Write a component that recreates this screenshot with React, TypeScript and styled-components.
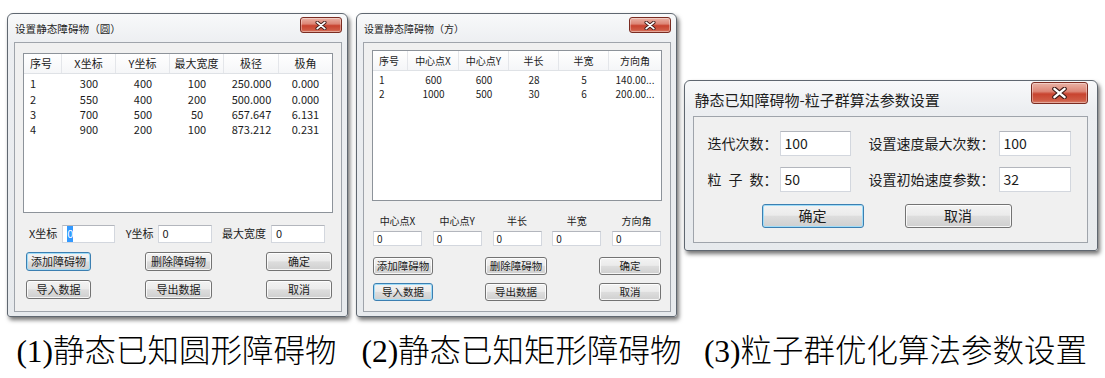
import React from "react";
import styled, { createGlobalStyle, css } from "styled-components";

const GlobalStyle = createGlobalStyle`
  html, body { margin: 0; padding: 0; background: #ffffff; }
  body { font-family: "Noto Sans CJK SC", "Noto Sans", sans-serif; }
  * { box-sizing: border-box; }
`;

const Page = styled.div`
  width: 1105px;
  height: 378px;
  overflow: hidden;
  display: flex;
  padding-left: 7px;
`;

const Figure = styled.figure<{ $w: number; $mr: number }>`
  margin: 0 ${(p) => p.$mr}px 0 0;
  width: ${(p) => p.$w}px;
  flex: none;
  display: flex;
  flex-direction: column;
`;

const Shot = styled.div`
  height: 330px;
  display: flex;
  align-items: center;
  justify-content: center;
`;

const Caption = styled.figcaption<{ $shift: number }>`
  display: flex;
  justify-content: center;
  margin-top: 4px;
  padding-left: ${(p) => (p.$shift > 0 ? p.$shift * 2 : 0)}px;
  padding-right: ${(p) => (p.$shift < 0 ? -p.$shift * 2 : 0)}px;
  font-family: "Liberation Serif", "Noto Sans CJK SC", serif;
  font-size: 31.5px;
  font-weight: 300;
  line-height: 36px;
  color: #000;
  white-space: nowrap;
`;

type Frame = { l: number; r: number; b: number; t: number };

const Window = styled.div<{ $w: number; $f: Frame }>`
  width: ${(p) => p.$w}px;
  flex: none;
  border: 1px solid #5f6770;
  border-radius: 6px 6px 3px 3px;
  background: linear-gradient(#f8f9fa, #eceef1 30px, #e7eaed);
  box-shadow: 2px 3px 4px rgba(0, 0, 0, 0.55);
  display: flex;
  flex-direction: column;
  padding: 0 ${(p) => p.$f.r - 1}px ${(p) => p.$f.b - 1}px ${(p) => p.$f.l - 1}px;
`;

const TitleBar = styled.div<{ $h: number; $fs: number }>`
  height: ${(p) => p.$h}px;
  display: flex;
  align-items: flex-start;
  justify-content: space-between;
  font-size: ${(p) => p.$fs}px;
  color: #1e1e1e;
`;

const TitleText = styled.span<{ $pt: number; $ml: number; $lh: number }>`
  padding-top: ${(p) => p.$pt}px;
  margin-left: ${(p) => p.$ml}px;
  line-height: ${(p) => p.$lh}px;
  white-space: nowrap;
`;

const CloseButton = styled.div<{ $w: number; $h: number; $mt: number }>`
  width: ${(p) => p.$w}px;
  height: ${(p) => p.$h}px;
  margin-top: ${(p) => p.$mt}px;
  border: 1px solid #7a2c22;
  border-radius: 3px;
  background: linear-gradient(#eab3a6 0%, #dd8676 42%, #c8432f 55%, #cf5a44 85%, #d9806b 100%);
  box-shadow: inset 0 0 0 1px rgba(255, 255, 255, 0.35);
  display: flex;
  align-items: center;
  justify-content: center;
`;

const CloseGlyph = ({ w, h }: { w: number; h: number }) => (
  <svg width={w} height={h} viewBox="0 0 12 9">
    <path d="M2.2 1.4 L9.8 7.6 M9.8 1.4 L2.2 7.6" stroke="#3d1a16" strokeWidth="3.4" strokeLinecap="round" fill="none" />
    <path d="M2.2 1.4 L9.8 7.6 M9.8 1.4 L2.2 7.6" stroke="#ffffff" strokeWidth="1.8" strokeLinecap="round" fill="none" />
  </svg>
);

const Client = styled.div<{ $pad: string; $fs: number }>`
  border: 1px solid #9fa4ab;
  background: #f0f0f0;
  padding: ${(p) => p.$pad};
  display: flex;
  flex-direction: column;
  font-size: ${(p) => p.$fs}px;
  color: #1c1c1c;
  line-height: 1.2;
`;

const ListBox = styled.div<{ $h: number }>`
  height: ${(p) => p.$h}px;
  flex: none;
  border: 1px solid #8d939a;
  background: #ffffff;
  display: flex;
  flex-direction: column;
`;

const HeaderRow = styled.div<{ $cols: string; $h: number }>`
  display: grid;
  grid-template-columns: ${(p) => p.$cols};
  height: ${(p) => p.$h}px;
  background: linear-gradient(#ffffff, #f5f6f8);
  border-bottom: 1px solid #dfe2e6;
`;

const HeaderCell = styled.div<{ $left: number }>`
  display: flex;
  align-items: center;
  justify-content: ${(p) => (p.$left ? "flex-start" : "center")};
  padding-left: ${(p) => p.$left}px;
  border-right: 1px solid #e4e6ea;
  white-space: nowrap;
  &:last-child { border-right: none; }
`;

const Rows = styled.div<{ $pt: number }>`
  padding-top: ${(p) => p.$pt}px;
`;

const Row = styled.div<{ $cols: string; $h: number }>`
  display: grid;
  grid-template-columns: ${(p) => p.$cols};
  height: ${(p) => p.$h}px;
  align-items: center;
`;

const Cell = styled.div<{ $left: number }>`
  text-align: ${(p) => (p.$left ? "left" : "center")};
  padding-left: ${(p) => p.$left}px;
  line-height: 1.35;
  white-space: nowrap;
`;

const TextBox = styled.div<{ $w: number; $h: number; $pl: number }>`
  width: ${(p) => p.$w}px;
  height: ${(p) => p.$h}px;
  flex: none;
  border: 1px solid #d3d7de;
  border-top-color: #b3b6bd;
  background: #ffffff;
  padding-left: ${(p) => p.$pl}px;
  display: flex;
  align-items: center;
`;

const Selected = styled.span`
  background: #3399ff;
  color: #ffffff;
  padding: 1px 0;
`;

const FieldRow = styled.div<{ $mt: number; $pad: string }>`
  display: flex;
  justify-content: space-between;
  align-items: center;
  margin-top: ${(p) => p.$mt}px;
  padding: ${(p) => p.$pad};
`;

const Field = styled.div<{ $gap: number }>`
  display: flex;
  align-items: center;
  gap: ${(p) => p.$gap}px;
  white-space: nowrap;
`;

const StackField = styled.div`
  display: flex;
  flex-direction: column;
  align-items: center;
  gap: 3px;
`;

const StackLabel = styled.span`
  line-height: 14px;
  white-space: nowrap;
`;

const ButtonRow = styled.div<{ $mt: number; $pad: string; $gap?: number; $start?: boolean }>`
  display: flex;
  justify-content: ${(p) => (p.$start ? "flex-start" : "space-between")};
  gap: ${(p) => p.$gap ?? 0}px;
  margin-top: ${(p) => p.$mt}px;
  padding: ${(p) => p.$pad};
`;

const Button = styled.button<{ $w: number; $h: number; $fs: number; $focus?: boolean }>`
  width: ${(p) => p.$w}px;
  height: ${(p) => p.$h}px;
  flex: none;
  padding: 0;
  font-family: "Noto Sans CJK SC", "Noto Sans", sans-serif;
  font-size: ${(p) => p.$fs}px;
  line-height: 1.2;
  color: #1c1c1c;
  border: 1px solid #737373;
  border-radius: 3px;
  background: linear-gradient(#f3f3f3 0%, #ebebeb 46%, #dddddd 52%, #cfcfcf 100%);
  box-shadow: inset 0 0 0 1px rgba(255, 255, 255, 0.8);
  ${(p) =>
    p.$focus &&
    css`
      border-color: #3c7fb1;
      box-shadow: inset 0 0 0 1px #9fdcf8;
    `}
`;

const ParamGrid = styled.div`
  display: grid;
  grid-template-columns: 72px 89px 130px 72px;
  grid-auto-rows: 25px;
  row-gap: 11px;
  align-items: center;
  white-space: nowrap;
`;

/* ---------------- data ---------------- */

const circleCols = "38px 54px 54px 54px 55px 1fr";
const circleHead = ["序号", "X坐标", "Y坐标", "最大宽度", "极径", "极角"];
const circleRows = [
  ["1", "300", "400", "100", "250.000", "0.000"],
  ["2", "550", "400", "200", "500.000", "0.000"],
  ["3", "700", "500", "50", "657.647", "6.131"],
  ["4", "900", "200", "100", "873.212", "0.231"],
];

const rectCols = "35px 51px 50px 50px 50px 1fr";
const rectHead = ["序号", "中心点X", "中心点Y", "半长", "半宽", "方向角"];
const rectRows = [
  ["1", "600", "600", "28", "5", "140.00..."],
  ["2", "1000", "500", "30", "6", "200.00..."],
];

const smallFrame: Frame = { l: 7, r: 6, b: 5, t: 29 };
const bigFrame: Frame = { l: 9, r: 10, b: 8, t: 36 };

function CircleDialog() {
  return (
    <Window $w={341} $f={smallFrame}>
      <TitleBar $h={28} $fs={10.6}>
        <TitleText $pt={8} $ml={1} $lh={14}>设置静态障碍物（圆）</TitleText>
        <CloseButton $w={42} $h={16} $mt={3}>
          <CloseGlyph w={12} h={9} />
        </CloseButton>
      </TitleBar>
      <Client $pad="10px 8px 12px 8px" $fs={11}>
        <ListBox $h={160}>
          <HeaderRow $cols={circleCols} $h={20}>
            {circleHead.map((h, i) => (
              <HeaderCell key={h} $left={i === 0 ? 6 : 0}>{h}</HeaderCell>
            ))}
          </HeaderRow>
          <Rows $pt={2}>
            {circleRows.map((r) => (
              <Row key={r[0]} $cols={circleCols} $h={15.3}>
                {r.map((c, i) => (
                  <Cell key={i} $left={i === 0 ? 6 : 0}>{c}</Cell>
                ))}
              </Row>
            ))}
          </Rows>
        </ListBox>
        <FieldRow $mt={12} $pad="0 8px 0 6px">
          <Field $gap={5}>
            X坐标
            <TextBox $w={53} $h={18} $pl={4}>
              <Selected>0</Selected>
            </TextBox>
          </Field>
          <Field $gap={4}>
            Y坐标
            <TextBox $w={54} $h={18} $pl={4}>0</TextBox>
          </Field>
          <Field $gap={5}>
            最大宽度
            <TextBox $w={54} $h={18} $pl={4}>0</TextBox>
          </Field>
        </FieldRow>
        <ButtonRow $mt={9} $pad="0 1px 0 3px">
          <Button $w={65} $h={19} $fs={11} $focus>添加障碍物</Button>
          <Button $w={67} $h={19} $fs={11}>删除障碍物</Button>
          <Button $w={66} $h={19} $fs={11}>确定</Button>
        </ButtonRow>
        <ButtonRow $mt={9} $pad="0 1px 0 3px">
          <Button $w={65} $h={19} $fs={11}>导入数据</Button>
          <Button $w={67} $h={19} $fs={11}>导出数据</Button>
          <Button $w={66} $h={19} $fs={11}>取消</Button>
        </ButtonRow>
      </Client>
    </Window>
  );
}

function RectDialog() {
  const labels = ["中心点X", "中心点Y", "半长", "半宽", "方向角"];
  return (
    <Window $w={321} $f={smallFrame}>
      <TitleBar $h={28} $fs={10}>
        <TitleText $pt={8} $ml={1} $lh={14}>设置静态障碍物（方）</TitleText>
        <CloseButton $w={42} $h={16} $mt={3}>
          <CloseGlyph w={12} h={9} />
        </CloseButton>
      </TitleBar>
      <Client $pad="7px 8px 10px 8px" $fs={10}>
        <ListBox $h={151}>
          <HeaderRow $cols={rectCols} $h={20}>
            {rectHead.map((h, i) => (
              <HeaderCell key={h} $left={i === 0 ? 6 : 0}>{h}</HeaderCell>
            ))}
          </HeaderRow>
          <Rows $pt={2}>
            {rectRows.map((r) => (
              <Row key={r[0]} $cols={rectCols} $h={14}>
                {r.map((c, i) => (
                  <Cell key={i} $left={i === 0 ? 6 : 0}>{c}</Cell>
                ))}
              </Row>
            ))}
          </Rows>
        </ListBox>
        <FieldRow $mt={13} $pad="0 1px">
          {labels.map((l) => (
            <StackField key={l}>
              <StackLabel>{l}</StackLabel>
              <TextBox $w={49} $h={15} $pl={3}>0</TextBox>
            </StackField>
          ))}
        </FieldRow>
        <ButtonRow $mt={11} $pad="0 1px">
          <Button $w={60} $h={18} $fs={10.5}>添加障碍物</Button>
          <Button $w={62} $h={18} $fs={10.5}>删除障碍物</Button>
          <Button $w={62} $h={18} $fs={10.5}>确定</Button>
        </ButtonRow>
        <ButtonRow $mt={8} $pad="0 1px">
          <Button $w={60} $h={18} $fs={10.5} $focus>导入数据</Button>
          <Button $w={62} $h={18} $fs={10.5}>导出数据</Button>
          <Button $w={62} $h={18} $fs={10.5}>取消</Button>
        </ButtonRow>
      </Client>
    </Window>
  );
}

function ParamDialog() {
  return (
    <Window $w={414} $f={bigFrame}>
      <TitleBar $h={35} $fs={15}>
        <TitleText $pt={10} $ml={2} $lh={18}>静态已知障碍物-粒子群算法参数设置</TitleText>
        <CloseButton $w={57} $h={22} $mt={1}>
          <CloseGlyph w={17} h={12} />
        </CloseButton>
      </TitleBar>
      <Client $pad="14px 14px 14px 14px" $fs={14}>
        <ParamGrid>
          <span>迭代次数：</span>
          <TextBox $w={71} $h={25} $pl={4}>100</TextBox>
          <span>设置速度最大次数：</span>
          <TextBox $w={72} $h={25} $pl={4}>100</TextBox>
          <span>粒{"\u2002"}子{"\u2002"}数：</span>
          <TextBox $w={71} $h={25} $pl={4}>50</TextBox>
          <span>设置初始速度参数：</span>
          <TextBox $w={72} $h={25} $pl={4}>32</TextBox>
        </ParamGrid>
        <ButtonRow $mt={12} $pad="0 0 0 54px" $gap={41} $start>
          <Button $w={102} $h={24} $fs={14} $focus>确定</Button>
          <Button $w={107} $h={24} $fs={14}>取消</Button>
        </ButtonRow>
      </Client>
    </Window>
  );
}

export default function App() {
  return (
    <>
      <GlobalStyle />
      <Page>
        <Figure $w={341} $mr={8}>
          <Shot>
            <CircleDialog />
          </Shot>
          <Caption $shift={-1}>(1)静态已知圆形障碍物</Caption>
        </Figure>
        <Figure $w={321} $mr={6}>
          <Shot>
            <RectDialog />
          </Shot>
          <Caption $shift={5}>(2)静态已知矩形障碍物</Caption>
        </Figure>
        <Figure $w={415} $mr={0}>
          <Shot>
            <ParamDialog />
          </Shot>
          <Caption $shift={5}>(3)粒子群优化算法参数设置</Caption>
        </Figure>
      </Page>
    </>
  );
}
